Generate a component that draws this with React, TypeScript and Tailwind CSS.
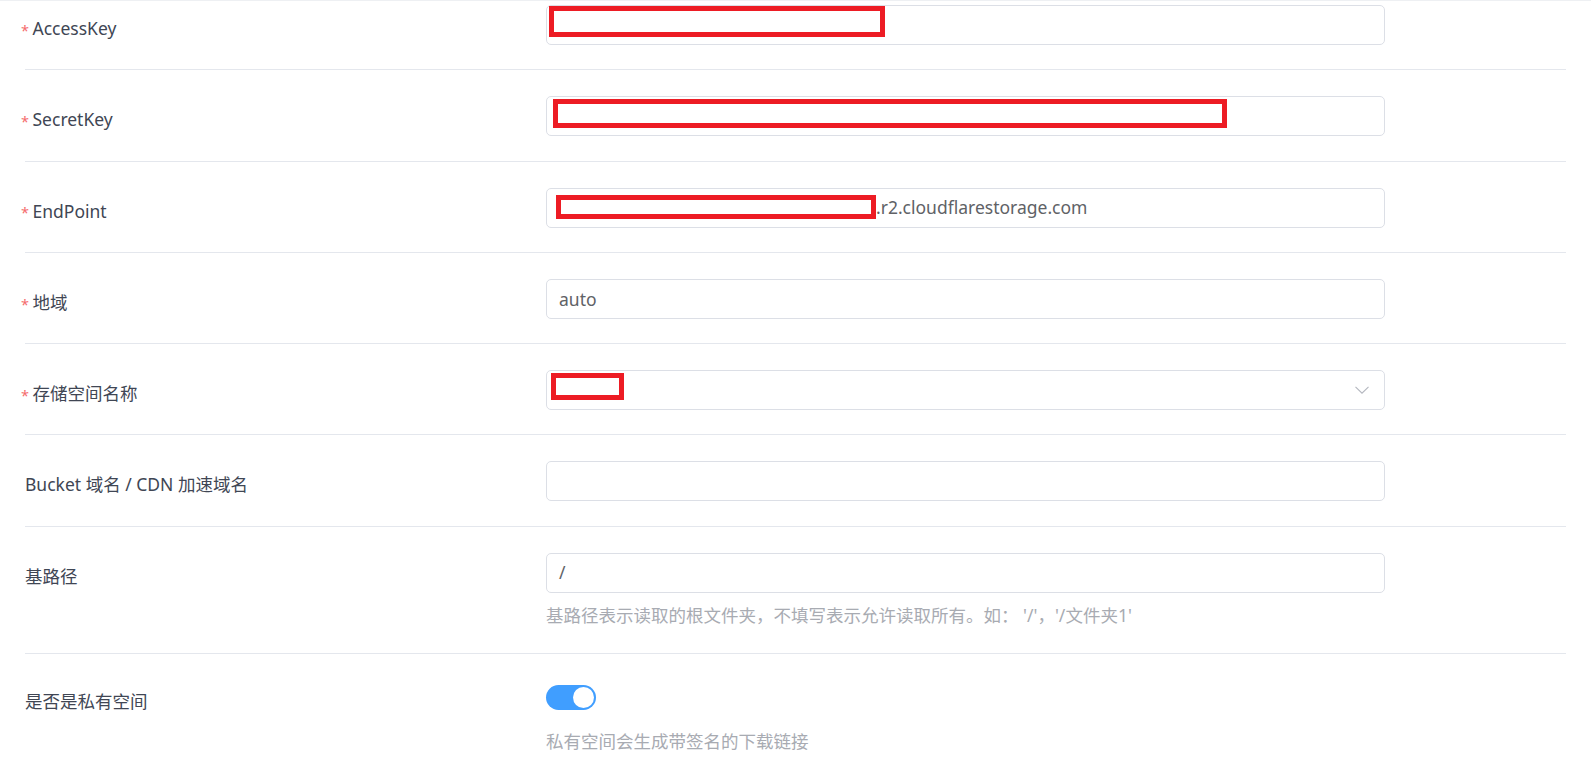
import React from "react";

// Storage settings form: required keys, endpoint, region, bucket, domain, base path, private switch.

function Label({ text, required }: { text: string; required?: boolean }) {
  return (
    <div className="mt-[10px] flex w-[521px] shrink-0 items-center self-start leading-[26px] text-[#404654]">
      {required && (
        <span className="-ml-[4px] mr-[3.5px] inline-block w-[8px] translate-y-[2px] text-center text-[14.5px] leading-none text-[#f56c6c]">
          *
        </span>
      )}
      <span>{text}</span>
    </div>
  );
}

function Field({
  label,
  required,
  children,
  help,
  last,
}: {
  label: string;
  required?: boolean;
  children: React.ReactNode;
  help?: string;
  last?: boolean;
}) {
  return (
    <div
      className={
        last
          ? "flex pt-[24px]"
          : help
          ? "flex border-b border-[#e4e7ed] pt-[26px] pb-[25px]"
          : "flex border-b border-[#e4e7ed] pt-[26px] pb-[24.25px]"
      }
    >
      <Label text={label} required={required} />
      <div className="w-[839px] shrink-0">
        {children}
        {help && <div className={last ? "mt-[11px] leading-[25px] text-[#a8abb2]" : "mt-[10px] leading-[25px] text-[#a8abb2]"}>{help}</div>}
      </div>
    </div>
  );
}

function Box({ children }: { children?: React.ReactNode }) {
  return (
    <div className="relative flex h-[40px] items-center rounded-[5px] border border-[#dcdfe6] bg-white px-[12px] text-[#606266]">
      {children}
    </div>
  );
}

export default function App() {
  return (
    <div className="h-[772px] w-full overflow-hidden border-t border-[#eef0f3] bg-white font-['Noto_Sans','Noto_Sans_CJK_SC',sans-serif] text-[17.5px]">
      <div className="-mt-[22px] w-[1591px] px-[25px]">
        <Field label="AccessKey" required>
          <Box>
            <span className="absolute left-[2px] top-0 h-[31px] w-[336px] border-[5px] border-[#ed1c24]" />
          </Box>
        </Field>

        <Field label="SecretKey" required>
          <Box>
            <span className="absolute left-[6px] top-[2px] h-[29px] w-[674px] border-[5px] border-[#ed1c24]" />
          </Box>
        </Field>

        <Field label="EndPoint" required>
          <Box>
            <span className="-ml-[3px] mb-[2px] inline-block h-[24px] w-[320px] shrink-0 border-[5px] border-[#ed1c24]" />
            <span>.r2.cloudflarestorage.com</span>
          </Box>
        </Field>

        <Field label="地域" required>
          <Box>
            <span>auto</span>
          </Box>
        </Field>

        <Field label="存储空间名称" required>
          <div className="relative flex h-[40px] items-center justify-end rounded-[5px] border border-[#dcdfe6] bg-white pr-[15px]">
            <span className="absolute left-[4px] top-[2px] h-[27px] w-[73px] border-[5px] border-[#ed1c24]" />
            <svg width="14" height="8" viewBox="0 0 14 8" fill="none">
              <path d="M0.5 0.8 L7 7.2 L13.5 0.8" stroke="#b4b7bf" strokeWidth="1.1" />
            </svg>
          </div>
        </Field>

        <Field label="Bucket 域名 / CDN 加速域名">
          <Box />
        </Field>

        <Field label="基路径" help="基路径表示读取的根文件夹，不填写表示允许读取所有。如： '/'，'/文件夹1'">
          <Box>
            <span>/</span>
          </Box>
        </Field>

        <Field label="是否是私有空间" help="私有空间会生成带签名的下载链接" last>
          <div className="flex h-[40px] items-center">
            <div className="flex h-[25px] w-[50px] items-center justify-end rounded-full bg-[#409eff] px-[2px]">
              <div className="h-[21px] w-[21px] rounded-full bg-white" />
            </div>
          </div>
        </Field>
      </div>
    </div>
  );
}
